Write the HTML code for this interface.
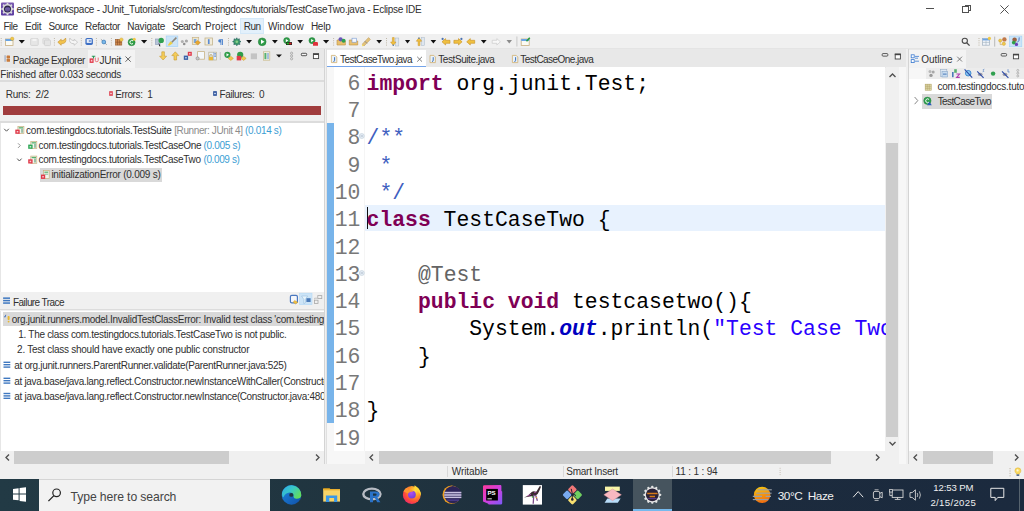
<!DOCTYPE html>
<html><head><meta charset="utf-8">
<style>
*{margin:0;padding:0;box-sizing:border-box}
html,body{width:1024px;height:511px;overflow:hidden;background:#f0f0f0;font-family:'Liberation Sans',sans-serif;font-size:10px;color:#222;position:relative}
.a{position:absolute}
.t{position:absolute;white-space:pre;line-height:1}

.code{font-family:"Liberation Mono",monospace;font-size:21.4px;position:absolute;white-space:pre;line-height:1;transform:scaleY(1.05);transform-origin:0 16.4px;color:#000}
.ln{font-family:"Liberation Mono",monospace;font-size:21.4px;position:absolute;white-space:pre;line-height:1;color:#787878;transform:scaleY(1.05);transform-origin:0 16.4px}
.kw{color:#7f0055;font-weight:bold}
.cm{color:#3f5fbf}
.an{color:#646464}
.st{color:#2a00ff}
.fd{color:#0000c0;font-style:italic;font-weight:bold}
.tri{position:absolute;width:0;height:0;border-left:3.5px solid transparent;border-right:3.5px solid transparent;border-top:4px solid #111}
.sepd{position:absolute;width:1px;height:9px;background:repeating-linear-gradient(#bbb 0 1px,transparent 1px 2px)}

</style></head><body>
<div class="a" style="left:0px;top:0px;width:1024px;height:33.5px;background:#fff;"></div>
<svg class="a" style="left:0;top:0" width="16" height="18" viewBox="0 0 16 18"><defs><linearGradient id="lg1" x1="0" y1="0" x2="0" y2="1"><stop offset="0" stop-color="#7a5ab0"/><stop offset="1" stop-color="#5a3aa0"/></linearGradient></defs><rect x="1" y="2.5" width="13" height="13" rx="1" fill="url(#lg1)"/><g fill="#d8d8dc"><circle cx="7.5" cy="9" r="5"/><rect x="6.6" y="2.8" width="1.8" height="12.4"/><rect x="1.3" y="8.1" width="12.4" height="1.8"/><rect x="6.6" y="2.8" width="1.8" height="12.4" transform="rotate(45 7.5 9)"/><rect x="6.6" y="2.8" width="1.8" height="12.4" transform="rotate(-45 7.5 9)"/></g><circle cx="7.5" cy="9" r="3.5" fill="#2a2640"/><circle cx="7.6" cy="9.3" r="2.5" fill="#5a4a90"/><path d="M5 8.6H10.2M5 9.8H10.2" stroke="#8a7ac0" stroke-width="0.5"/></svg>
<div class="t" id="t0" style="left:16.50px;top:5.04px;font-size:10px;color:#303030;letter-spacing:-0.270px;font-family:'Liberation Sans',sans-serif;">eclipse-workspace - JUnit_Tutorials/src/com/testingdocs/tutorials/TestCaseTwo.java - Eclipse IDE</div>
<div class="a" style="left:925.6px;top:8px;width:8px;height:1px;background:#505050;"></div>
<div class="a" style="left:964.5px;top:4.5px;width:6.5px;height:6.5px;background:#fff;border:1px solid #505050"></div>
<div class="a" style="left:962.3px;top:6.3px;width:6.9px;height:6.5px;background:#fff;border:1px solid #505050"></div>
<svg class="a" style="left:1000px;top:4.5px" width="9" height="9"><path d="M0.4 0.4L8.6 8.6M8.6 0.4L0.4 8.6" stroke="#505050" stroke-width="1"/></svg>
<div class="a" style="left:240.2px;top:18.3px;width:24.2px;height:15.4px;background:#e3f0fb;border:0.6px solid #d4e8f8"></div>
<div class="t" id="t1" style="left:3.40px;top:22.04px;font-size:10px;color:#303030;letter-spacing:-0.456px;font-family:'Liberation Sans',sans-serif;">File</div>
<div class="t" id="t2" style="left:24.90px;top:22.04px;font-size:10px;color:#303030;letter-spacing:-0.184px;font-family:'Liberation Sans',sans-serif;">Edit</div>
<div class="t" id="t3" style="left:48.50px;top:22.04px;font-size:10px;color:#303030;letter-spacing:-0.448px;font-family:'Liberation Sans',sans-serif;">Source</div>
<div class="t" id="t4" style="left:85.10px;top:22.04px;font-size:10px;color:#303030;letter-spacing:-0.350px;font-family:'Liberation Sans',sans-serif;">Refactor</div>
<div class="t" id="t5" style="left:127.20px;top:22.04px;font-size:10px;color:#303030;letter-spacing:-0.184px;font-family:'Liberation Sans',sans-serif;">Navigate</div>
<div class="t" id="t6" style="left:172.20px;top:22.04px;font-size:10px;color:#303030;letter-spacing:-0.565px;font-family:'Liberation Sans',sans-serif;">Search</div>
<div class="t" id="t7" style="left:205.00px;top:22.04px;font-size:10px;color:#303030;letter-spacing:0.054px;font-family:'Liberation Sans',sans-serif;">Project</div>
<div class="t" id="t8" style="left:243.80px;top:22.04px;font-size:10px;color:#303030;letter-spacing:-0.486px;font-family:'Liberation Sans',sans-serif;">Run</div>
<div class="t" id="t9" style="left:267.90px;top:22.04px;font-size:10px;color:#303030;letter-spacing:0.037px;font-family:'Liberation Sans',sans-serif;">Window</div>
<div class="t" id="t10" style="left:310.90px;top:22.04px;font-size:10px;color:#303030;letter-spacing:-0.245px;font-family:'Liberation Sans',sans-serif;">Help</div>
<div class="a" style="left:0px;top:33.5px;width:1024px;height:15.5px;background:#f0f0f0;"></div>
<div class="a" style="left:0px;top:48.2px;width:1024px;height:0.8px;background:#e4e4e4;"></div>
<svg class="a" style="left:0;top:33px" width="1024" height="16" viewBox="0 33 1024 16"><rect x="0.7" y="38.0" width="1" height="1" fill="#c0b8a8"/><rect x="0.7" y="40.2" width="1" height="1" fill="#c0b8a8"/><rect x="0.7" y="42.4" width="1" height="1" fill="#c0b8a8"/><rect x="0.7" y="44.6" width="1" height="1" fill="#c0b8a8"/><rect x="5.4" y="39" width="7.6" height="6.4" fill="#fbfbf4" stroke="#c8b080" stroke-width="0.8"/><rect x="5.4" y="39" width="7.6" height="2" fill="#6aa4e4"/><circle cx="12.2" cy="38.8" r="1.7" fill="#f0c848" stroke="#c89a30" stroke-width="0.4"/><path d="M18.7 40H24.9L21.799999999999997 43.5Z" fill="#111"/><rect x="30.6" y="38.6" width="7.6" height="6.8" rx="0.8" fill="#e6e6e6" stroke="#cfcfcf" stroke-width="0.8"/><rect x="32.4" y="38.8" width="4" height="2.2" fill="#f4f4f4"/><rect x="42.9" y="38.3" width="6" height="5.6" rx="0.8" fill="#e6e6e6" stroke="#d0d0d0" stroke-width="0.7"/><rect x="44.5" y="40" width="6" height="5.6" rx="0.8" fill="#e4e4e4" stroke="#cccccc" stroke-width="0.7"/><rect x="53.9" y="38.0" width="1" height="1" fill="#c0b8a8"/><rect x="53.9" y="40.2" width="1" height="1" fill="#c0b8a8"/><rect x="53.9" y="42.4" width="1" height="1" fill="#c0b8a8"/><rect x="53.9" y="44.6" width="1" height="1" fill="#c0b8a8"/><path d="M57.8 42.2L61.2 39.2V40.8Q64.6 40.6 65.6 38Q67.2 43.6 61.2 43.8V45.3Z" fill="#f2c24c" stroke="#c8922a" stroke-width="0.6"/><path d="M77.6 42.2L74.2 39.2V40.8Q70.8 40.6 69.8 38Q68.2 43.6 74.2 43.8V45.3Z" fill="#f6f6f6" stroke="#bdbdbd" stroke-width="0.7"/><rect x="80.8" y="38.0" width="1" height="1" fill="#c0b8a8"/><rect x="80.8" y="40.2" width="1" height="1" fill="#c0b8a8"/><rect x="80.8" y="42.4" width="1" height="1" fill="#c0b8a8"/><rect x="80.8" y="44.6" width="1" height="1" fill="#c0b8a8"/><rect x="85.4" y="37.9" width="7.5" height="7" rx="1.6" fill="#3d6fc4"/><rect x="86.7" y="39.1" width="4.9" height="3.8" fill="#eaf0fa"/><rect x="88.8" y="40.4" width="2" height="1.2" fill="#3d6fc4"/><rect x="95.9" y="38.0" width="1" height="1" fill="#c0b8a8"/><rect x="95.9" y="40.2" width="1" height="1" fill="#c0b8a8"/><rect x="95.9" y="42.4" width="1" height="1" fill="#c0b8a8"/><rect x="95.9" y="44.6" width="1" height="1" fill="#c0b8a8"/><path d="M100.9 39.3L106.8 44.8" stroke="#9a9a9a" stroke-width="0.9"/><circle cx="103.8" cy="42" r="1.9" fill="#7ab8e8" stroke="#3a78b8" stroke-width="0.7"/><rect x="110.9" y="38.0" width="1" height="1" fill="#c0b8a8"/><rect x="110.9" y="40.2" width="1" height="1" fill="#c0b8a8"/><rect x="110.9" y="42.4" width="1" height="1" fill="#c0b8a8"/><rect x="110.9" y="44.6" width="1" height="1" fill="#c0b8a8"/><rect x="115.4" y="39.3" width="6.4" height="5.8" fill="#d08a50" stroke="#9a6030" stroke-width="0.6"/><path d="M117.5 39.3V45.1M119.7 39.3V45.1M115.4 42.2H121.8" stroke="#8a5028" stroke-width="0.6"/><circle cx="121.4" cy="39.6" r="1.7" fill="#f2cc50" stroke="#c89a30" stroke-width="0.4"/><circle cx="131.6" cy="42.2" r="3.5" fill="#30a048" stroke="#1e7a35" stroke-width="0.5"/><path d="M133 40.9A1.8 1.8 0 1 0 133 43.5" fill="none" stroke="#fff" stroke-width="1"/><circle cx="134.3" cy="39.3" r="1.5" fill="#f0c848"/><path d="M141 40H147.2L144.1 43.5Z" fill="#111"/><rect x="151.3" y="38.0" width="1" height="1" fill="#c0b8a8"/><rect x="151.3" y="40.2" width="1" height="1" fill="#c0b8a8"/><rect x="151.3" y="42.4" width="1" height="1" fill="#c0b8a8"/><rect x="151.3" y="44.6" width="1" height="1" fill="#c0b8a8"/><rect x="155.6" y="39" width="4.5" height="5.5" fill="#b8c4d8" stroke="#8898b8" stroke-width="0.6"/><circle cx="161.2" cy="40.4" r="2.7" fill="#30a050"/><path d="M158.6 42.5L160.6 46.2L159.2 46.2Z" fill="#222"/><rect x="166.2" y="36" width="11.6" height="10.6" fill="#cce4f7" stroke="#a8d4f8" stroke-width="0.7"/><path d="M167.6 45.4L170.4 41.2L172.8 43.2L169.6 45.6Z" fill="#f0d040"/><path d="M171.8 42.2L176.4 37.6" stroke="#8c8478" stroke-width="1.6"/><circle cx="182.3" cy="41.4" r="1.5" fill="#b0b0b0"/><circle cx="186.4" cy="41" r="1.6" fill="#a8a8a8"/><circle cx="184.2" cy="44" r="1.3" fill="#909090"/><rect x="192.3" y="37.4" width="6.4" height="7.2" fill="#eee6cc" stroke="#c8b488" stroke-width="0.7"/><rect x="193.8" y="39" width="2.6" height="4" fill="#7aa6dc"/><path d="M197.5 40.6L200.6 42.6L197.6 44.8L195 42.6Z" fill="#e8a830" stroke="#c08020" stroke-width="0.4"/><rect x="205" y="38" width="7.4" height="7" fill="#f2ecda" stroke="#c4b48c" stroke-width="0.8"/><rect x="207.9" y="39.2" width="1.7" height="4.8" fill="#5a8ad4"/><path d="M221.8 39.2H219.8A1.6 1.6 0 0 0 219.8 42.4H220.5V44.9H221.4V39.9H222.1V44.9H223V39.2Z" fill="#4a80cc"/><rect x="228.0" y="38.0" width="1" height="1" fill="#c0b8a8"/><rect x="228.0" y="40.2" width="1" height="1" fill="#c0b8a8"/><rect x="228.0" y="42.4" width="1" height="1" fill="#c0b8a8"/><rect x="228.0" y="44.6" width="1" height="1" fill="#c0b8a8"/><path d="M236.8 37.8L237.6 39.4L239.4 38.8L239.2 40.6L241 41.6L239.4 42.6L240 44.4L238.2 44.2L236.8 45.7L235.6 44.2L233.8 44.6L234.2 42.6L232.6 41.6L234.2 40.6L234 38.8L235.8 39.4Z" fill="#3c9a6a" stroke="#1e5a5a" stroke-width="0.6"/><circle cx="236.8" cy="41.7" r="1.3" fill="#8ad08a"/><path d="M246.2 40H252L249.1 43.5Z" fill="#111"/><circle cx="262.2" cy="41.8" r="3.9" fill="#2f9c48" stroke="#1c7a34" stroke-width="0.5"/><path d="M261 39.6V44L264.5 41.8Z" fill="#fff"/><path d="M272 40H277.8L274.9 43.5Z" fill="#111"/><circle cx="286.7" cy="40.6" r="3.1" fill="#2f9c48" stroke="#1c7a34" stroke-width="0.4"/><path d="M285.8 39V42.2L288.4 40.6Z" fill="#fff"/><rect x="286" y="42.1" width="6" height="2.9" fill="#222"/><rect x="286.7" y="42.8" width="2.2" height="1.5" fill="#20c020"/><rect x="289.2" y="42.8" width="2.2" height="1.5" fill="#e02020"/><path d="M297.3 40H303L300.15 43.5Z" fill="#111"/><circle cx="312" cy="40.6" r="3.1" fill="#2f9c48" stroke="#1c7a34" stroke-width="0.4"/><path d="M311.1 39V42.2L313.7 40.6Z" fill="#fff"/><path d="M313 43.2Q313 42 314.2 42H316.8Q318 42 318 43.2V45.7H313Z" fill="#e0303c"/><path d="M323 40H329.2L326.1 43.5Z" fill="#111"/><rect x="333.1" y="38.0" width="1" height="1" fill="#c0b8a8"/><rect x="333.1" y="40.2" width="1" height="1" fill="#c0b8a8"/><rect x="333.1" y="42.4" width="1" height="1" fill="#c0b8a8"/><rect x="333.1" y="44.6" width="1" height="1" fill="#c0b8a8"/><path d="M337 40H340L341 41H345.4V45H337Z" fill="#e8c070" stroke="#c09040" stroke-width="0.6"/><circle cx="340.6" cy="39.3" r="2.1" fill="#6a58b8"/><circle cx="343.6" cy="40.8" r="2" fill="#30a050"/><path d="M349.3 40H352.3L353.3 41H357.7V45H349.3Z" fill="#e8c070" stroke="#c09040" stroke-width="0.6"/><rect x="352" y="38.2" width="4.6" height="4" fill="#f4f8ff" stroke="#7a9ad0" stroke-width="0.6"/><path d="M362.2 44.2L368.6 37.6L370.4 39.4L364 46Z" fill="#e2c27a" stroke="#b89050" stroke-width="0.5"/><path d="M362.2 44.2L364 46L362 46.2Z" fill="#f4e060"/><path d="M364.8 41.2L367 43.4" stroke="#8a8a8a" stroke-width="1"/><path d="M376.3 40H382L379.15 43.5Z" fill="#111"/><rect x="386.0" y="38.0" width="1" height="1" fill="#c0b8a8"/><rect x="386.0" y="40.2" width="1" height="1" fill="#c0b8a8"/><rect x="386.0" y="42.4" width="1" height="1" fill="#c0b8a8"/><rect x="386.0" y="44.6" width="1" height="1" fill="#c0b8a8"/><rect x="395.6" y="38" width="3.2" height="8" fill="#dfe6ee" stroke="#a8b8c8" stroke-width="0.5"/><path d="M392.4 37.6H394.2V42H396L393.3 45.6L390.6 42H392.4Z" fill="#f0c040" stroke="#c89020" stroke-width="0.5"/><rect x="392.6" y="44.6" width="1.4" height="1.2" fill="#4a78c0"/><path d="M405 40H410.1L407.55 43.5Z" fill="#111"/><rect x="421.2" y="37.6" width="3.2" height="8" fill="#dfe6ee" stroke="#a8b8c8" stroke-width="0.5"/><path d="M418.1 45.6H419.9V41.2H421.7L419 37.6L416.3 41.2H418.1Z" fill="#f0c040" stroke="#c89020" stroke-width="0.5"/><rect x="418.2" y="37.6" width="1.4" height="1.2" fill="#4a78c0"/><path d="M430.6 40H436.2L433.4 43.5Z" fill="#111"/><path d="M442 41.8L445.6 38.6V40.3H450 V43.3H445.6V45Z" fill="#f0c040" stroke="#c89020" stroke-width="0.6"/><circle cx="442.6" cy="38.9" r="1.1" fill="#4a70b0"/><path d="M462.09999999999997 41.8L458.5 38.6V40.3H453.9 V43.3H458.5V45Z" fill="#f0c040" stroke="#c89020" stroke-width="0.6"/><circle cx="461.4" cy="38.9" r="1.1" fill="#4a70b0"/><path d="M466.7 41.8L470.3 38.6V40.3H474.7 V43.3H470.3V45Z" fill="#f0c040" stroke="#c89020" stroke-width="0.6"/><path d="M480.9 40H486.6L483.75 43.5Z" fill="#111"/><path d="M500.4 41.8L496.8 38.6V40.3H492.2 V43.3H496.8V45Z" fill="#f8f8f8" stroke="#c4c4c4" stroke-width="0.6"/><path d="M506.5 40H512L509.25 43.5Z" fill="#8a8a8a"/><rect x="516.4" y="36.5" width="1" height="10" fill="#c8c8c8"/><rect x="521.2" y="39" width="8" height="6.4" fill="#fbfbf4" stroke="#c8b080" stroke-width="0.8"/><rect x="521.2" y="39" width="8" height="2" fill="#6aa4e4"/><path d="M526.5 41.2L529.8 37.8" stroke="#2a9a40" stroke-width="1.6"/><circle cx="964.8" cy="40.8" r="2.6" fill="none" stroke="#4a4a4a" stroke-width="1.1"/><path d="M966.7 42.7L969.6 45.6" stroke="#4a4a4a" stroke-width="1.3"/><rect x="978.5" y="38.0" width="1" height="1" fill="#c0b8a8"/><rect x="978.5" y="40.2" width="1" height="1" fill="#c0b8a8"/><rect x="978.5" y="42.4" width="1" height="1" fill="#c0b8a8"/><rect x="978.5" y="44.6" width="1" height="1" fill="#c0b8a8"/><rect x="982.6" y="38.6" width="7" height="6.6" fill="#f0f4f8" stroke="#a0b0c0" stroke-width="0.7"/><rect x="982.6" y="38.6" width="7" height="1.8" fill="#6aa4e4"/><path d="M982.6 42.4H989.6M986 40.4V45.2" stroke="#a0b0c0" stroke-width="0.6"/><circle cx="989.4" cy="38.4" r="1.6" fill="#f0c848"/><rect x="994.2" y="36.6" width="1" height="10" fill="#b8b8b8"/><circle cx="1000.2" cy="40.6" r="1.6" fill="#f0c848" stroke="#c89a30" stroke-width="0.4"/><circle cx="1004.4" cy="39.4" r="2.2" fill="#c07848"/><circle cx="1003.8" cy="43.8" r="1.7" fill="#f0c848" stroke="#c89a30" stroke-width="0.4"/><path d="M1000.2 42.2V44.6H1002" stroke="#c8a050" stroke-width="0.6" fill="none"/><rect x="1009.6" y="36.1" width="12.2" height="10.6" fill="#cce4f7" stroke="#a8d4f8" stroke-width="0.7"/><circle cx="1014.6" cy="39.8" r="2.3" fill="#9a6040"/><circle cx="1013.8" cy="42.6" r="1.9" fill="#30a048"/><circle cx="1016.4" cy="44.4" r="1.7" fill="#6a40b8"/><path d="M1019.2 37.4Q1019.6 41 1017.4 42.4" stroke="#3a6ac0" stroke-width="0.9" fill="none"/></svg>
<div class="a" style="left:0px;top:49px;width:325px;height:19px;background:#e8e8e8;"></div>
<div class="a" style="left:87.5px;top:49.5px;width:47px;height:18px;background:#f3f3f3;"></div>
<div class="t" id="t11" style="left:12.80px;top:55.53px;font-size:10px;color:#303030;letter-spacing:-0.421px;font-family:'Liberation Sans',sans-serif;">Package Explorer</div>
<div class="t" id="t12" style="left:99.50px;top:55.53px;font-size:10px;color:#303030;letter-spacing:-0.259px;font-family:'Liberation Sans',sans-serif;">JUnit</div>
<svg class="a" style="left:0px;top:49px" width="325" height="18" viewBox="0 49 325 18"><rect x="4.4" y="55.2" width="1.4" height="6.6" fill="#a8b4c8"/><rect x="6.6" y="55.4" width="3.4" height="3" rx="0.6" fill="#c87a3a"/><rect x="6.6" y="58.8" width="3.4" height="3" rx="0.6" fill="#c87a3a"/><rect x="89.6" y="58.4" width="4" height="4.5" fill="#e03a4a"/><rect x="90.8" y="59.8" width="1.6" height="1.8" fill="#f8c8d0"/><path d="M91.8 56.3H95.3M93.5 56.3V58.4" stroke="#2a9a5a" stroke-width="1.1"/><path d="M95.3 57.6V60.6Q95.3 61.7 96.7 61.7Q98.2 61.7 98.2 60.6V57.6" fill="none" stroke="#e8606a" stroke-width="0.9"/><path d="M125.5 56.5L130.7 61.7M130.7 56.5L125.5 61.7" stroke="#555" stroke-width="0.9"/><path d="M161.8 51.8H164.4V56.2H166.6L163.1 60L159.6 56.2H161.8Z" fill="#f4cc58" stroke="#c89a30" stroke-width="0.6"/><path d="M174 60H176.6V55.6H178.8L175.3 51.8L171.8 55.6H174Z" fill="#f4cc58" stroke="#c89a30" stroke-width="0.6"/><rect x="183.8" y="55.6" width="4.3" height="4.3" fill="#3a62a8"/><rect x="185.2" y="57" width="1.5" height="1.5" fill="#c8d4ec"/><rect x="187.8" y="51.8" width="4" height="4" fill="#e03a4a"/><rect x="189.1" y="53.1" width="1.4" height="1.4" fill="#f8c8d0"/><rect x="197.6" y="51.6" width="6.8" height="7.6" fill="#f4f8fc" stroke="#c8b488" stroke-width="0.8"/><circle cx="197.6" cy="58.4" r="1.6" fill="#c8c8c8" stroke="#8a8a8a" stroke-width="0.6"/><rect x="208.8" y="52.2" width="7.8" height="7.8" fill="#e8f0f8" stroke="#b8b090" stroke-width="0.7"/><path d="M213.6 52.2V60" stroke="#8aa0c8" stroke-width="0.6"/><rect x="214.2" y="53.4" width="1.8" height="1" fill="#4a78c0"/><rect x="214.2" y="55.6" width="1.8" height="1" fill="#4a78c0"/><rect x="209" y="56.8" width="4" height="3.4" fill="#e8b838"/><path d="M209.8 56.8V55.8A1.2 1.2 0 0 1 212.2 55.8V56.8" fill="none" stroke="#a88020" stroke-width="0.6"/><rect x="219.8" y="52" width="0.9" height="8" fill="#c4c4c4"/><circle cx="227.4" cy="54.8" r="3.1" fill="#2f9c48"/><path d="M226.5 53.2V56.4L229 54.8Z" fill="#fff"/><path d="M230.8 56.3L233.4 58.4L230.8 60.4L228.2 58.4Z" fill="#f0c850" stroke="#c89a30" stroke-width="0.5"/><circle cx="240.2" cy="54.8" r="3.1" fill="#2f9c48"/><rect x="236.7" y="55.9" width="4.5" height="4.5" fill="#e03a4a"/><path d="M243.6 56.3L246.2 58.4L243.6 60.4L241 58.4Z" fill="#f0c850" stroke="#c89a30" stroke-width="0.5"/><rect x="250.8" y="53.4" width="6.2" height="5.8" fill="#c4c4c4"/><rect x="263.4" y="51.8" width="6.4" height="8.4" fill="#f4f4ec" stroke="#c8b888" stroke-width="0.7"/><rect x="264.4" y="53" width="2" height="6.2" fill="#58b070"/><rect x="267" y="53" width="2" height="6.2" fill="#a8c0e0"/><path d="M276.1 54.6H281.9L279 57.6Z" fill="#111"/><circle cx="291.6" cy="53.2" r="1.1" fill="none" stroke="#999" stroke-width="0.7"/><circle cx="291.6" cy="56" r="1.1" fill="none" stroke="#999" stroke-width="0.7"/><circle cx="291.6" cy="58.8" r="1.1" fill="none" stroke="#999" stroke-width="0.7"/><rect x="301.3" y="53.3" width="5.4" height="2.4" rx="0.8" fill="#f4f4f4" stroke="#444" stroke-width="0.9"/><rect x="313.4" y="53.8" width="5.2" height="4.8" fill="#fff" stroke="#444" stroke-width="0.9"/><rect x="313" y="53.4" width="6" height="1.6" fill="#444"/></svg>
<div class="t" id="t13" style="left:0.30px;top:70.03px;font-size:10px;color:#303030;letter-spacing:-0.276px;font-family:'Liberation Sans',sans-serif;">Finished after 0.033 seconds</div>
<div class="a" style="left:0px;top:80px;width:325px;height:1.6px;background:#dcdcdc;"></div>
<div class="t" id="t14" style="left:5.80px;top:89.83px;font-size:10px;color:#303030;letter-spacing:-0.269px;font-family:'Liberation Sans',sans-serif;">Runs:  2/2</div>
<div class="a" style="left:108.9px;top:90.9px;width:4.2px;height:5.1px;background:#e2606c;border-radius:0.8px"></div>
<div class="a" style="left:110.3px;top:92.6px;width:1.4px;height:1.6px;background:#f4b8c0;"></div>
<div class="t" id="t15" style="left:115.30px;top:89.83px;font-size:10px;color:#303030;letter-spacing:-0.392px;font-family:'Liberation Sans',sans-serif;">Errors:  1</div>
<div class="a" style="left:213px;top:90.9px;width:4.3px;height:5.1px;background:#4a6aa8;border-radius:0.8px"></div>
<div class="a" style="left:214.4px;top:92.6px;width:1.5px;height:1.6px;background:#b8c8e8;"></div>
<div class="t" id="t16" style="left:219.50px;top:89.83px;font-size:10px;color:#303030;letter-spacing:-0.389px;font-family:'Liberation Sans',sans-serif;">Failures:  0</div>
<div class="a" style="left:3.4px;top:106px;width:317.6px;height:9px;background:#a03c3d;"></div>
<div class="a" style="left:0px;top:121px;width:325px;height:1.5px;background:#dcdcdc;"></div>
<div class="a" style="left:0px;top:122.5px;width:324px;height:169.5px;background:#fff;"></div>
<div class="a" style="left:0px;top:122.5px;width:1px;height:169.5px;background:#e6e6e6;"></div>
<div class="t" id="t17" style="left:26.10px;top:126.03px;font-size:10px;color:#303030;letter-spacing:-0.245px;font-family:'Liberation Sans',sans-serif;">com.testingdocs.tutorials.TestSuite</div>
<div class="t" id="t18" style="left:174.20px;top:126.03px;font-size:10px;color:#8c8c8c;letter-spacing:-0.385px;font-family:'Liberation Sans',sans-serif;">[Runner: JUnit 4]</div>
<div class="t" id="t19" style="left:245.10px;top:126.03px;font-size:10px;color:#3b9ed4;letter-spacing:-0.341px;font-family:'Liberation Sans',sans-serif;">(0.014 s)</div>
<div class="t" id="t20" style="left:38.50px;top:140.53px;font-size:10px;color:#303030;letter-spacing:-0.287px;font-family:'Liberation Sans',sans-serif;">com.testingdocs.tutorials.TestCaseOne</div>
<div class="t" id="t21" style="left:203.50px;top:140.53px;font-size:10px;color:#3b9ed4;letter-spacing:-0.297px;font-family:'Liberation Sans',sans-serif;">(0.005 s)</div>
<div class="t" id="t22" style="left:38.50px;top:155.34px;font-size:10px;color:#303030;letter-spacing:-0.285px;font-family:'Liberation Sans',sans-serif;">com.testingdocs.tutorials.TestCaseTwo</div>
<div class="t" id="t23" style="left:203.50px;top:155.34px;font-size:10px;color:#3b9ed4;letter-spacing:-0.385px;font-family:'Liberation Sans',sans-serif;">(0.009 s)</div>
<div class="a" style="left:39.8px;top:167.7px;width:122px;height:14.3px;background:#d9d9d9;"></div>
<svg class="a" style="left:0px;top:122px" width="325" height="62" viewBox="0 122 325 62"><path d="M4.2 128.8L6.5 131.2L8.8 128.8" fill="none" stroke="#555" stroke-width="1"/><rect x="17.900000000000002" y="126.4" width="6" height="7.2" fill="#f2f6ec" stroke="#c8b080" stroke-width="0.7"/><rect x="18.7" y="127.2" width="4.4" height="1.3" fill="#58b070"/><rect x="21.1" y="128.8" width="2" height="4" fill="#9ac0a8"/><rect x="15.3" y="129.6" width="4.4" height="4.2" fill="#e03a4a"/><rect x="16.7" y="131" width="1.6" height="1.5" fill="#fff" opacity="0.75"/><path d="M18 143.3L20.3 145.6L18 147.9" fill="none" stroke="#888" stroke-width="0.9"/><rect x="30.8" y="141.4" width="6" height="7.2" fill="#f2f6ec" stroke="#c8b080" stroke-width="0.7"/><rect x="31.599999999999998" y="142.2" width="4.4" height="1.3" fill="#58b070"/><rect x="34.0" y="143.8" width="2" height="4" fill="#9ac0a8"/><rect x="28.2" y="144.6" width="4.4" height="4.2" fill="#30a858"/><rect x="29.599999999999998" y="146" width="1.6" height="1.5" fill="#fff" opacity="0.75"/><path d="M17.2 158.6L19.4 161L21.6 158.6" fill="none" stroke="#555" stroke-width="1"/><rect x="30.8" y="156.1" width="6" height="7.2" fill="#f2f6ec" stroke="#c8b080" stroke-width="0.7"/><rect x="31.599999999999998" y="156.89999999999998" width="4.4" height="1.3" fill="#58b070"/><rect x="34.0" y="158.5" width="2" height="4" fill="#9ac0a8"/><rect x="28.2" y="159.29999999999998" width="4.4" height="4.2" fill="#e03a4a"/><rect x="29.599999999999998" y="160.7" width="1.6" height="1.5" fill="#fff" opacity="0.75"/><rect x="43.4" y="170.4" width="5.8" height="8.2" fill="#f2f6ec" stroke="#c8b080" stroke-width="0.7"/><rect x="44.4" y="171.6" width="3.8" height="1.2" fill="#58b070"/><rect x="44.4" y="173.6" width="3.8" height="1.2" fill="#9ac0a8"/><rect x="41" y="174.6" width="4.2" height="4.3" fill="#e03a4a"/><rect x="42.3" y="176" width="1.5" height="1.5" fill="#fff" opacity="0.75"/></svg>
<div class="t" id="t24" style="left:51.40px;top:170.03px;font-size:10px;color:#303030;letter-spacing:-0.244px;font-family:'Liberation Sans',sans-serif;">initializationError (0.009 s)</div>
<div class="a" style="left:0px;top:291.6px;width:324px;height:18.4px;background:#f0f0f0;"></div>
<div class="t" id="t25" style="left:13.10px;top:297.74px;font-size:10px;color:#303030;letter-spacing:-0.581px;font-family:'Liberation Sans',sans-serif;">Failure Trace</div>
<div class="a" style="left:0px;top:309.4px;width:324px;height:1.1px;background:#dcdcdc;"></div>
<div class="a" style="left:0px;top:310.5px;width:324px;height:140px;background:#fff;"></div>
<div class="a" style="left:0px;top:310.5px;width:1px;height:140px;background:#e6e6e6;"></div>
<div class="a" style="left:2.8px;top:311.5px;width:321.5px;height:14.5px;background:#d9d9d9;"></div>
<div class="t" id="t26" style="left:11.70px;top:314.64px;font-size:10px;color:#303030;letter-spacing:-0.281px;font-family:'Liberation Sans',sans-serif;">org.junit.runners.model.InvalidTestClassError: Invalid test class '</div>
<div class="t" id="t27" style="left:276.00px;top:314.64px;font-size:10px;color:#303030;letter-spacing:-0.281px;font-family:'Liberation Sans',sans-serif;">com.testingdocs.tutorials.TestCaseTwo'</div>
<div class="t" id="t28" style="left:18.30px;top:329.84px;font-size:10px;color:#303030;letter-spacing:-0.302px;font-family:'Liberation Sans',sans-serif;">1. The class com.testingdocs.tutorials.TestCaseTwo is not public.</div>
<div class="t" id="t29" style="left:17.10px;top:345.04px;font-size:10px;color:#303030;letter-spacing:-0.248px;font-family:'Liberation Sans',sans-serif;">2. Test class should have exactly one public constructor</div>
<div class="t" id="t30" style="left:14.30px;top:360.84px;font-size:10px;color:#303030;letter-spacing:-0.338px;font-family:'Liberation Sans',sans-serif;">at org.junit.runners.ParentRunner.validate(ParentRunner.java:525)</div>
<div class="t" id="t31" style="left:14.30px;top:376.84px;font-size:10px;color:#303030;letter-spacing:-0.316px;font-family:'Liberation Sans',sans-serif;">at java.base/java.lang.reflect.Constructor.newInstanceWithCaller(</div>
<div class="t" id="t32" style="left:283.40px;top:376.84px;font-size:10px;color:#303030;letter-spacing:-0.316px;font-family:'Liberation Sans',sans-serif;">Constructor.java:500)</div>
<div class="t" id="t33" style="left:14.30px;top:392.04px;font-size:10px;color:#303030;letter-spacing:-0.313px;font-family:'Liberation Sans',sans-serif;">at java.base/java.lang.reflect.Constructor.newInstance(</div>
<div class="t" id="t34" style="left:239.70px;top:392.04px;font-size:10px;color:#303030;letter-spacing:-0.313px;font-family:'Liberation Sans',sans-serif;">Constructor.java:480)</div>
<svg class="a" style="left:0px;top:292px" width="325" height="110" viewBox="0 292 325 110"><rect x="3.1" y="297.40" width="6.9" height="1.5" fill="#3f78c0"/><rect x="3.1" y="299.85" width="6.9" height="1.5" fill="#3f78c0"/><rect x="3.1" y="302.30" width="6.9" height="1.5" fill="#3f78c0"/><rect x="290.4" y="295.4" width="7" height="7.4" rx="1.4" fill="#f4f6fa" stroke="#4a78c0" stroke-width="1.2"/><path d="M294.6 300.4L297.7 302.3L295.6 304L293.2 302.2Z" fill="#f0c040" stroke="#c89020" stroke-width="0.4"/><rect x="299.6" y="293.2" width="12.4" height="11.4" fill="#cce4f7" stroke="#b4daf8" stroke-width="0.6"/><path d="M301.6 296H307.6L305.4 299.4V302.8L303.8 303.6V299.4Z" fill="#e8f4fc" stroke="#8ab4d8" stroke-width="0.5"/><rect x="306.4" y="298.2" width="4.2" height="3.8" fill="#4a7ab8"/><rect x="317.8" y="295.6" width="4" height="3" fill="none" stroke="#a8a8a8" stroke-width="0.8"/><rect x="314.4" y="300.2" width="3.6" height="3.2" fill="none" stroke="#a8a8a8" stroke-width="0.8"/><path d="M314.6 299.4V298.2H317" fill="none" stroke="#a8a8a8" stroke-width="0.6"/><path d="M4.2 316.6Q5.2 318.6 5.8 314.8" fill="none" stroke="#3a6ab8" stroke-width="0.9"/><rect x="7.6" y="315.9" width="2" height="4.2" rx="0.8" fill="#e8b830"/><rect x="7.7" y="320.8" width="1.8" height="1.7" rx="0.8" fill="#e8b830"/><rect x="3.5" y="361.60" width="6.8" height="1.4" fill="#3f78c0"/><rect x="3.5" y="364.00" width="6.8" height="1.4" fill="#3f78c0"/><rect x="3.5" y="366.40" width="6.8" height="1.4" fill="#3f78c0"/><rect x="3.5" y="377.60" width="6.8" height="1.4" fill="#3f78c0"/><rect x="3.5" y="380.00" width="6.8" height="1.4" fill="#3f78c0"/><rect x="3.5" y="382.40" width="6.8" height="1.4" fill="#3f78c0"/><rect x="3.5" y="392.80" width="6.8" height="1.4" fill="#3f78c0"/><rect x="3.5" y="395.20" width="6.8" height="1.4" fill="#3f78c0"/><rect x="3.5" y="397.60" width="6.8" height="1.4" fill="#3f78c0"/></svg>
<div class="a" style="left:0px;top:450.5px;width:324px;height:13.5px;background:#f0f0f0;"></div>
<div class="a" style="left:14px;top:451.2px;width:215.2px;height:12.5px;background:#cdcdcd;"></div>
<svg class="a" style="left:5px;top:454.3px" width="5" height="7"><path d="M4 0.5L1 3.5L4 6.5" fill="none" stroke="#505050" stroke-width="1.35"/></svg>
<svg class="a" style="left:315px;top:454.3px" width="5" height="7"><path d="M1 0.5L4 3.5L1 6.5" fill="none" stroke="#505050" stroke-width="1.35"/></svg>
<div class="a" style="left:324px;top:49px;width:1.2px;height:415px;background:#d4d4d4;"></div>
<div class="a" style="left:327px;top:49px;width:579px;height:18.5px;background:#e8e8e8;"></div>
<div class="a" style="left:327px;top:49.7px;width:99px;height:17.6px;background:#fff;"></div>
<div class="a" style="left:327px;top:65.6px;width:99px;height:2px;background:#74a4ea;"></div>
<div class="t" id="t35" style="left:340.10px;top:55.03px;font-size:10px;color:#303030;letter-spacing:-0.585px;font-family:'Liberation Sans',sans-serif;">TestCaseTwo.java</div>
<div class="t" id="t36" style="left:438.30px;top:55.03px;font-size:10px;color:#303030;letter-spacing:-0.433px;font-family:'Liberation Sans',sans-serif;">TestSuite.java</div>
<div class="t" id="t37" style="left:520.30px;top:55.03px;font-size:10px;color:#303030;letter-spacing:-0.551px;font-family:'Liberation Sans',sans-serif;">TestCaseOne.java</div>
<svg class="a" style="left:327px;top:49px" width="579" height="18" viewBox="327 49 579 18"><path d="M331.4 55.4H335.2L336.8 57V62.6H331.4Z" fill="#eaf2fb" stroke="#d0b070" stroke-width="0.8"/><path d="M334.6 57.2V60.4Q334.6 61.6 333.4 61.4" fill="none" stroke="#3a70b8" stroke-width="1"/><path d="M430.0 55.4H433.8L435.40000000000003 57V62.6H430.0Z" fill="#eaf2fb" stroke="#d0b070" stroke-width="0.8"/><path d="M433.20000000000005 57.2V60.4Q433.20000000000005 61.6 432.0 61.4" fill="none" stroke="#3a70b8" stroke-width="1"/><path d="M512.4 55.4H516.2L517.8 57V62.6H512.4Z" fill="#eaf2fb" stroke="#d0b070" stroke-width="0.8"/><path d="M515.6 57.2V60.4Q515.6 61.6 514.4 61.4" fill="none" stroke="#3a70b8" stroke-width="1"/><path d="M417.2 56.8L422 61.6M422 56.8L417.2 61.6" stroke="#666" stroke-width="0.85"/><rect x="882.2" y="53.6" width="5.6" height="2.5" rx="0.8" fill="#f4f4f4" stroke="#444" stroke-width="0.9"/><rect x="895.2" y="54.2" width="5.2" height="4.8" fill="#fff" stroke="#444" stroke-width="0.9"/><rect x="894.8" y="53.6" width="6" height="1.6" fill="#444"/></svg>
<div class="a" style="left:327px;top:67.4px;width:558px;height:383.6px;background:#fff;"></div>
<div class="a" style="left:327px;top:67.4px;width:6.7px;height:396.6px;background:#f7f7f7;"></div>
<div class="a" style="left:364.3px;top:67.4px;width:0.8px;height:383.6px;background:#f5f5f5;"></div>
<div class="a" style="left:327.3px;top:122.9px;width:6.5px;height:299.7px;background:#78b4ea;"></div>
<div class="a" style="left:365px;top:205.2px;width:520px;height:25.8px;background:#e8f2fe;"></div>
<div class="a" style="left:366.5px;top:207px;width:1.2px;height:22px;background:#111;"></div>
<div class="a" style="left:0;top:67.4px;width:885.5px;height:383.6px;overflow:hidden"><div class="a" style="left:0;top:-67.4px;width:1024px;height:511px"><div class="ln" style="left:347.56px;top:73.90px;letter-spacing:0">6</div>
<div class="code" style="left:366.6px;top:73.90px"><span class="kw">import</span> org.junit.Test;</div>
<div class="ln" style="left:347.56px;top:101.18px;letter-spacing:0">7</div>
<div class="ln" style="left:347.56px;top:128.46px;letter-spacing:0">8</div>
<div class="code" style="left:366.6px;top:128.46px"><span class="cm">/**</span></div>
<div class="ln" style="left:347.56px;top:155.74px;letter-spacing:0">9</div>
<div class="code" style="left:366.6px;top:155.74px"><span class="cm"> *</span></div>
<div class="ln" style="left:334.72px;top:183.02px;letter-spacing:0">10</div>
<div class="code" style="left:366.6px;top:183.02px"><span class="cm"> */</span></div>
<div class="ln" style="left:334.72px;top:210.30px;letter-spacing:0">11</div>
<div class="code" style="left:366.6px;top:210.30px"><span class="kw">class</span> TestCaseTwo {</div>
<div class="ln" style="left:334.72px;top:237.58px;letter-spacing:0">12</div>
<div class="ln" style="left:334.72px;top:264.86px;letter-spacing:0">13</div>
<div class="code" style="left:366.6px;top:264.86px">    <span class="an">@Test</span></div>
<div class="ln" style="left:334.72px;top:292.14px;letter-spacing:0">14</div>
<div class="code" style="left:366.6px;top:292.14px">    <span class="kw">public</span> <span class="kw">void</span> testcasetwo(){</div>
<div class="ln" style="left:334.72px;top:319.42px;letter-spacing:0">15</div>
<div class="code" style="left:366.6px;top:319.42px">        System.<span class="fd">out</span>.println(<span class="st">"Test Case Two"</span>);</div>
<div class="ln" style="left:334.72px;top:346.70px;letter-spacing:0">16</div>
<div class="code" style="left:366.6px;top:346.70px">    }</div>
<div class="ln" style="left:334.72px;top:373.98px;letter-spacing:0">17</div>
<div class="ln" style="left:334.72px;top:401.26px;letter-spacing:0">18</div>
<div class="code" style="left:366.6px;top:401.26px">}</div>
<div class="ln" style="left:334.72px;top:428.54px;letter-spacing:0">19</div></div></div>
<svg class="a" style="left:358px;top:132.3px" width="8" height="8" viewBox="358 132.3 8 8"><circle cx="361.8" cy="136.3" r="2.5" fill="#e4ecf4" stroke="#c0ccd8" stroke-width="0.6"/><path d="M360.6 136.3H363" stroke="#8a9ab0" stroke-width="0.6"/></svg>
<svg class="a" style="left:358px;top:269.1px" width="8" height="8" viewBox="358 269.1 8 8"><circle cx="361.8" cy="273.1" r="2.5" fill="#e4ecf4" stroke="#c0ccd8" stroke-width="0.6"/><path d="M360.6 273.1H363" stroke="#8a9ab0" stroke-width="0.6"/></svg>
<div class="a" style="left:885.7px;top:67.4px;width:13.3px;height:383.6px;background:#f0f0f0;"></div>
<div class="a" style="left:886.3px;top:142.7px;width:12px;height:294px;background:#cdcdcd;"></div>
<svg class="a" style="left:888.5px;top:73px" width="7" height="5"><path d="M0.5 4L3.5 1L6.5 4" fill="none" stroke="#505050" stroke-width="1.35"/></svg>
<svg class="a" style="left:888.5px;top:441px" width="7" height="5"><path d="M0.5 1L3.5 4L6.5 1" fill="none" stroke="#505050" stroke-width="1.35"/></svg>
<div class="a" style="left:899px;top:67.4px;width:7px;height:396.6px;background:#f7f7f7;"></div>
<div class="a" style="left:333.7px;top:451px;width:31.3px;height:13px;background:#f7f7f7;"></div>
<div class="a" style="left:365px;top:451px;width:520.7px;height:13px;background:#f0f0f0;"></div>
<div class="a" style="left:379px;top:451.2px;width:452px;height:12.5px;background:#cdcdcd;"></div>
<svg class="a" style="left:369px;top:454.3px" width="5" height="7"><path d="M4 0.5L1 3.5L4 6.5" fill="none" stroke="#505050" stroke-width="1.35"/></svg>
<svg class="a" style="left:875px;top:454.3px" width="5" height="7"><path d="M1 0.5L4 3.5L1 6.5" fill="none" stroke="#505050" stroke-width="1.35"/></svg>
<div class="a" style="left:325.2px;top:49px;width:1.1px;height:415px;background:#f0f0f0;"></div>
<div class="a" style="left:326.3px;top:49px;width:0.8px;height:415px;background:#e0e0e0;"></div>
<div class="a" style="left:906px;top:49px;width:2.5px;height:415px;background:#f0f0f0;"></div>
<div class="a" style="left:908.5px;top:49px;width:115.5px;height:415px;background:#fff;"></div>
<div class="a" style="left:908.5px;top:49px;width:115.5px;height:18.6px;background:#e8e8e8;"></div>
<div class="a" style="left:909px;top:49.8px;width:57px;height:17.8px;background:#f3f3f3;"></div>
<div class="a" style="left:908.5px;top:67.6px;width:115.5px;height:11px;background:#f7f7f7;"></div>
<div class="a" style="left:925.6px;top:67.6px;width:98.4px;height:11.1px;background:#ececec;"></div>
<div class="a" style="left:908px;top:49px;width:1px;height:415px;background:#d4d4d4;"></div>
<div class="t" id="t38" style="left:921.30px;top:54.83px;font-size:10px;color:#303030;letter-spacing:-0.070px;font-family:'Liberation Sans',sans-serif;">Outline</div>
<div class="a" style="left:922.2px;top:94.3px;width:69.5px;height:14.4px;background:#d9d9d9;"></div>
<svg class="a" style="left:908px;top:49px" width="116" height="60" viewBox="908 49 116 60"><rect x="911.2" y="54.8" width="3" height="3" fill="#fff" stroke="#3a7ad0" stroke-width="0.8"/><rect x="911.2" y="59.6" width="3" height="3" fill="#fff" stroke="#3a7ad0" stroke-width="0.8"/><path d="M915 56.4H919M915 58.2H918M915 61.2H919" stroke="#3a7ad0" stroke-width="0.8"/><path d="M957.2 56.7L962 61.5M962 56.7L957.2 61.5" stroke="#666" stroke-width="0.85"/><rect x="1001.2" y="53.6" width="5.4" height="2.4" rx="0.8" fill="#f4f4f4" stroke="#444" stroke-width="0.9"/><rect x="1013.4" y="54.4" width="5.2" height="4.4" fill="#fff" stroke="#444" stroke-width="0.9"/><rect x="1013" y="53.8" width="6" height="1.6" fill="#444"/><circle cx="930" cy="71.4" r="1.5" fill="#b8b8b8"/><circle cx="933.2" cy="72" r="1.5" fill="#a8a8a8"/><circle cx="931" cy="75.4" r="1.7" fill="#9a9a9a"/><rect x="940.4" y="69.6" width="6.4" height="6.8" fill="#dde8f4" stroke="#9ab0c8" stroke-width="0.6"/><rect x="942" y="71.4" width="5.6" height="5.6" fill="#c8dcf0" stroke="#8aa8c8" stroke-width="0.6"/><rect x="943" y="73.6" width="3.6" height="1" fill="#4a7ab8"/><rect x="952" y="72" width="1.6" height="5.2" fill="#4a7ab8"/><rect x="954.2" y="69.2" width="2.6" height="3.6" fill="#58b070"/><path d="M956.4 74H959.6L956.6 77.4H959.8" fill="none" stroke="#b040b0" stroke-width="1.1"/><circle cx="968.2" cy="73.2" r="2.8" fill="#8ac8f0" stroke="#2a78c8" stroke-width="0.8"/><path d="M964.6 69.4L972.2 77.6" stroke="#2a4aa8" stroke-width="1.1"/><ellipse cx="980.2" cy="74.4" rx="2.4" ry="1.6" fill="#9a9aa8"/><path d="M977.2 71.4L983.6 77.8" stroke="#2a4aa8" stroke-width="1.1"/><path d="M984.4 69.2Q982.4 69.4 983.4 70.6Q984.6 71.6 982.6 71.8" fill="none" stroke="#4a7ac0" stroke-width="0.6"/><circle cx="993.1" cy="73.6" r="2.2" fill="#30a050"/><ellipse cx="1005" cy="74.4" rx="2.4" ry="1.6" fill="#9a9aa8"/><path d="M1002 71.4L1008.4 77.8" stroke="#2a4aa8" stroke-width="1.1"/><path d="M1008 69.2V72H1009.6" fill="none" stroke="#4a7ac0" stroke-width="0.7"/><circle cx="1017.8" cy="70.4" r="1" fill="none" stroke="#999" stroke-width="0.6"/><circle cx="1017.8" cy="73.2" r="1" fill="none" stroke="#999" stroke-width="0.6"/><circle cx="1017.8" cy="76" r="1" fill="none" stroke="#999" stroke-width="0.6"/><rect x="925.2" y="84.2" width="6" height="6" fill="#e8e4b8" stroke="#b0a060" stroke-width="0.6"/><path d="M927.2 84.2V90.2M929.2 84.2V90.2M925.2 86.2H931.2M925.2 88.2H931.2" stroke="#a09050" stroke-width="0.5"/><path d="M914.6 97L917.8 100.6L914.6 104.2" fill="none" stroke="#888" stroke-width="1"/><circle cx="927.4" cy="100.8" r="3.7" fill="#30a050" stroke="#1e7a35" stroke-width="0.4"/><path d="M928.9 99.4A1.9 1.9 0 1 0 928.9 102.2" fill="none" stroke="#fff" stroke-width="1"/><path d="M929.4 101.8L931.8 105.2H927Z" fill="#2a5ab8"/></svg>
<div class="t" id="t39" style="left:937.50px;top:82.23px;font-size:10px;color:#303030;letter-spacing:-0.245px;font-family:'Liberation Sans',sans-serif;">com.testingdocs.tutorials</div>
<div class="t" id="t40" style="left:937.70px;top:97.33px;font-size:10px;color:#303030;letter-spacing:-0.603px;font-family:'Liberation Sans',sans-serif;">TestCaseTwo</div>
<div class="a" style="left:908.5px;top:450.5px;width:115.5px;height:13.5px;background:#f0f0f0;"></div>
<div class="a" style="left:923px;top:451.3px;width:70.2px;height:12.3px;background:#cdcdcd;"></div>
<svg class="a" style="left:912.5px;top:454.3px" width="5" height="7"><path d="M4 0.5L1 3.5L4 6.5" fill="none" stroke="#505050" stroke-width="1.35"/></svg>
<svg class="a" style="left:1014px;top:454.3px" width="5" height="7"><path d="M1 0.5L4 3.5L1 6.5" fill="none" stroke="#505050" stroke-width="1.35"/></svg>
<div class="a" style="left:0px;top:464px;width:1024px;height:14.7px;background:#f0f0f0;"></div>
<div class="a" style="left:447px;top:465.5px;width:1px;height:11px;background:#d8d8d8;"></div>
<div class="t" id="t41" style="left:451.80px;top:467.04px;font-size:10px;color:#303030;letter-spacing:-0.100px;font-family:'Liberation Sans',sans-serif;">Writable</div>
<div class="a" style="left:562.6px;top:465.5px;width:1px;height:11px;background:#d8d8d8;"></div>
<div class="t" id="t42" style="left:566.20px;top:467.04px;font-size:10px;color:#303030;letter-spacing:-0.231px;font-family:'Liberation Sans',sans-serif;">Smart Insert</div>
<div class="a" style="left:671.7px;top:465.5px;width:1px;height:11px;background:#d8d8d8;"></div>
<div class="t" id="t43" style="left:675.50px;top:467.04px;font-size:10px;color:#303030;letter-spacing:-0.159px;font-family:'Liberation Sans',sans-serif;">11 : 1 : 94</div>
<svg class="a" style="left:778px;top:466px" width="4" height="11" viewBox="778 466 4 11"><g fill="#c8c0b8"><rect x="779.6" y="467.8" width="1" height="1"/><rect x="779.6" y="469.9" width="1" height="1"/><rect x="779.6" y="472" width="1" height="1"/><rect x="779.6" y="474.1" width="1" height="1"/></g></svg>
<svg class="a" style="left:1005px;top:465px" width="19" height="13" viewBox="1005 465 19 13"><g fill="#b8b0a0"><rect x="1009.6" y="468" width="0.9" height="1.2"/><rect x="1009.6" y="470.4" width="0.9" height="1.2"/><rect x="1009.6" y="472.8" width="0.9" height="1.2"/><rect x="1009.6" y="475.2" width="0.9" height="1.2"/></g><path d="M1017.9 467.8A3 3 0 0 1 1020.9 470.8Q1020.9 472.4 1019.4 473.6V474.2H1016.4V473.6Q1014.9 472.4 1014.9 470.8A3 3 0 0 1 1017.9 467.8Z" fill="#f8d860" stroke="#e0b030" stroke-width="0.5"/><circle cx="1017.6" cy="470.4" r="1.1" fill="#fff8d0"/><rect x="1016.5" y="474.2" width="2.8" height="1.9" rx="0.6" fill="#5a7090"/></svg>
<div class="a" style="left:0;top:478.7px;width:1024px;height:32.3px;background:linear-gradient(90deg,#223a45 0%,#20343f 35%,#1c2b3d 70%,#1b2a3e 100%)"></div>
<div class="a" style="left:38.7px;top:478.7px;width:231px;height:32.3px;background:#f2f2f2;border-top:1px solid #d4d4d4"></div>
<div class="t" id="t44" style="left:70.60px;top:490.77px;font-size:12.2px;color:#444;letter-spacing:-0.106px;font-family:'Liberation Sans',sans-serif;">Type here to search</div>
<div class="a" style="left:633.1px;top:478.7px;width:39.1px;height:32.3px;background:#46545e;"></div>
<div class="a" style="left:633.1px;top:509.2px;width:39.1px;height:1.8px;background:#76b9ed;"></div>
<svg class="a" style="left:0px;top:479px" width="1024" height="32" viewBox="0 479 1024 32"><defs><linearGradient id="edg" x1="0.2" y1="0" x2="0.8" y2="1"><stop offset="0" stop-color="#3ab4e8"/><stop offset="0.45" stop-color="#44c8b0"/><stop offset="0.7" stop-color="#5ad870"/><stop offset="1" stop-color="#2a90d8"/></linearGradient><linearGradient id="edb" x1="0" y1="0" x2="1" y2="1"><stop offset="0" stop-color="#1e88e0"/><stop offset="1" stop-color="#1050a8"/></linearGradient><radialGradient id="ffg" cx="0.7" cy="0.25" r="0.9"><stop offset="0" stop-color="#ffe040"/><stop offset="0.35" stop-color="#ff9a28"/><stop offset="0.7" stop-color="#ff4a3a"/><stop offset="1" stop-color="#e8207a"/></radialGradient><radialGradient id="ffp" cx="0.4" cy="0.3" r="0.8"><stop offset="0" stop-color="#b050f0"/><stop offset="1" stop-color="#6a3ad8"/></radialGradient><linearGradient id="psg" x1="0" y1="0" x2="1" y2="1"><stop offset="0" stop-color="#ff3a9a"/><stop offset="0.5" stop-color="#d040e0"/><stop offset="1" stop-color="#7a5af8"/></linearGradient><linearGradient id="sun" x1="0" y1="0" x2="0.3" y2="1"><stop offset="0" stop-color="#f8cc10"/><stop offset="1" stop-color="#f07010"/></linearGradient></defs><path d="M13 489L18.6 488.3V493.6H13ZM19.6 488.1L26 487.3V493.6H19.6ZM13 494.6H18.6V500.3L13 499.7ZM19.6 494.6H26V501.8L19.6 501Z" fill="#fff"/><circle cx="56.6" cy="492.8" r="3.8" fill="none" stroke="#222" stroke-width="1.2"/><path d="M53.9 495.6L48.4 501.1" stroke="#222" stroke-width="1.3"/><linearGradient id="edt" x1="0" y1="0" x2="1" y2="0.6"><stop offset="0" stop-color="#30a8e8"/><stop offset="0.5" stop-color="#38c8c8"/><stop offset="1" stop-color="#60dc60"/></linearGradient><circle cx="291.5" cy="494.9" r="9.8" fill="url(#edb)"/><path d="M281.9 493.2A9.8 9.8 0 0 1 301.3 495.6Q300.8 498.8 296.6 498.8Q293.2 498.6 293.6 495.4Q293.2 492.2 289.6 492.4Q285.2 492.8 283.8 496.6Q282.6 498.6 281.9 493.2Z" fill="url(#edt)"/><ellipse cx="291.3" cy="494.9" rx="2.1" ry="1.9" fill="#213640"/><path d="M323.2 488.2H329.6L330.8 489.4H323.2Z" fill="#e8a818"/><rect x="323.2" y="489" width="16.8" height="12.6" fill="#f8d468"/><rect x="323.2" y="489" width="16.8" height="1.4" fill="#eab030"/><path d="M325.9 501.9V495.4H337.2V501.9H334.1V498.1H329.3V501.9Z" fill="#3a98e8"/><ellipse cx="371.9" cy="494" rx="8.6" ry="5.4" fill="none" stroke="#b8bcc4" stroke-width="2.4"/><path d="M370 502.2V491.6H375.6Q379.6 491.6 379.6 494.6Q379.6 496.8 377.4 497.4L380.4 502.2H377.2L374.8 497.8H373V502.2ZM373 495.8H375.2Q376.6 495.8 376.6 494.6Q376.6 493.6 375.2 493.6H373Z" fill="#2a72c8" fill-rule="evenodd"/><circle cx="411.8" cy="495" r="8.9" fill="url(#ffg)"/><path d="M414.6 485.2Q421.8 489.6 420.8 496Q419 490 414.2 489.4Z" fill="#ffd838"/><circle cx="411.9" cy="494.6" r="3.9" fill="url(#ffp)"/><path d="M403.4 491.6Q405.2 487.6 407.6 487.8L408.6 490.2Q411.8 489.4 413.4 491.8Q409.6 491.2 408 493.4Z" fill="#ff9830" opacity="0.9"/><circle cx="451.6" cy="494.7" r="9.1" fill="#f0a020"/><circle cx="452.8" cy="494.7" r="8.6" fill="#2c2458"/><rect x="444.4" y="491.8" width="17" height="1.6" fill="#c8c0e0"/><rect x="444.2" y="494.2" width="17.2" height="1.6" fill="#c8c0e0"/><rect x="444.4" y="496.6" width="17" height="1.5" fill="#c8c0e0"/><rect x="446.6" y="499.6" width="12.4" height="1" fill="#5a48a0"/><path d="M483 486.6Q482.8 485.4 484 485.3L500.6 485.1Q501.6 485.2 501.4 486.6V491L502.2 491.6V503.2Q502.2 504.6 500.6 504.6H490Q488.6 504.6 487.8 503.4L483 501.6Z" fill="url(#psg)"/><rect x="486.2" y="488.9" width="11.7" height="11.6" fill="#000"/><text x="487.4" y="495.4" font-family="Liberation Sans" font-size="6.2" font-weight="bold" fill="#fff">PS</text><rect x="487.4" y="498.4" width="4.4" height="0.9" fill="#fff"/><rect x="522.8" y="485.1" width="19.2" height="19.5" fill="#fff"/><path d="M524 497.6Q527.6 496.4 530.4 493.2Q532.6 490.4 535 491.4Q536.6 492.4 537.4 490L539.6 486.2Q540.8 485.8 540.8 487.2L539 491.6Q538 494.6 535.6 495.6Z" fill="#3a2a30"/><path d="M533.8 494.8L533.2 503.8M535.6 495L537.4 500.8" fill="none" stroke="#7a4a8a" stroke-width="1.3"/><path d="M527.4 496.2L531 494.2M534.2 492.6L536.4 492" stroke="#b050b0" stroke-width="0.9"/><circle cx="532.6" cy="496.8" r="0.9" fill="#40a040"/><circle cx="536.4" cy="497.6" r="0.8" fill="#e0a040"/><g transform="rotate(45 572.4 494.85)"><rect x="565.3" y="487.75" width="6.7" height="6.7" rx="1.3" fill="#f07878"/><rect x="572.8" y="487.75" width="6.7" height="6.7" rx="1.3" fill="#70d060"/><rect x="572.8" y="495.25" width="6.7" height="6.7" rx="1.3" fill="#f8e070"/><rect x="565.3" y="495.25" width="6.7" height="6.7" rx="1.3" fill="#78aaf0"/></g><path d="M571.2 488.8Q572.6 492 572.3 498.6M572.6 494.2Q575.6 493.6 575.6 496.2" fill="none" stroke="#223" stroke-width="1"/><circle cx="572.3" cy="499.4" r="1.3" fill="#223"/><rect x="605" y="486.6" width="14.8" height="4.3" fill="#f8f4a8"/><path d="M604.6 502.8L607.4 498.6H620.6L617.8 502.8Z" fill="#b8dcf8"/><path d="M603.8 494.8L612.6 488.9L621.4 494.8L612.6 500.7Z" fill="#f8b8c0" stroke="#c88890" stroke-width="0.4"/><g fill="#e4e4e4"><rect x="651.2" y="485.8" width="2.2" height="18" rx="0.8" transform="rotate(0 652.3 494.8)"/><rect x="651.2" y="485.8" width="2.2" height="18" rx="0.8" transform="rotate(30 652.3 494.8)"/><rect x="651.2" y="485.8" width="2.2" height="18" rx="0.8" transform="rotate(60 652.3 494.8)"/><rect x="651.2" y="485.8" width="2.2" height="18" rx="0.8" transform="rotate(90 652.3 494.8)"/><rect x="651.2" y="485.8" width="2.2" height="18" rx="0.8" transform="rotate(120 652.3 494.8)"/><rect x="651.2" y="485.8" width="2.2" height="18" rx="0.8" transform="rotate(150 652.3 494.8)"/></g><circle cx="652.3" cy="494.8" r="7.6" fill="#e4e4e4"/><circle cx="652.3" cy="494.8" r="6.4" fill="#2a2238"/><path d="M647.2 493.6H657.6M649.6 496.6H655" stroke="#d87a18" stroke-width="1.5"/><path d="M648 498.6H656.6" stroke="#5a3a90" stroke-width="1"/><circle cx="762.1" cy="494.9" r="8.2" fill="url(#sun)"/><g stroke="#9aa0a8" stroke-width="1.1"><path d="M757.6 489.8H771.8"/><path d="M756.2 493.2H771.6"/><path d="M752.8 496.4H762M765.6 496.4H771"/><path d="M752.8 499.6H768.4"/></g><path d="M853.2 497.2L858.2 491.6L863.2 497.2" fill="none" stroke="#e8e8e8" stroke-width="1"/><rect x="873.4" y="491.4" width="6.4" height="7.2" rx="1.6" fill="none" stroke="#d8d8d8" stroke-width="0.9"/><path d="M879.8 493.4L882.2 492.2V497.8L879.8 496.6" fill="none" stroke="#d8d8d8" stroke-width="0.9"/><path d="M874.6 489.8H878.6M874.6 500.4H878.6" stroke="#d8d8d8" stroke-width="0.8"/><rect x="892.2" y="490" width="10.8" height="7.4" fill="none" stroke="#d8d8d8" stroke-width="0.9"/><path d="M889.8 491.6V495.6H892.2M897.6 497.4V499.2M894.8 499.4H900.6" fill="none" stroke="#d8d8d8" stroke-width="0.9"/><rect x="889.6" y="489.6" width="3" height="2.4" fill="#1c2b3e" stroke="#d8d8d8" stroke-width="0.8"/><path d="M910 492.6H912.2L915.4 489.8V500.2L912.2 497.4H910Z" fill="none" stroke="#d8d8d8" stroke-width="0.9"/><path d="M917.2 493Q918.4 495 917.2 497M919.4 491.4Q921.4 495 919.4 498.6" fill="none" stroke="#d8d8d8" stroke-width="0.8"/><path d="M990.8 488.3H1003.8V497.4H997.8L995.2 500.6V497.4H990.8Z" fill="none" stroke="#e8e8e8" stroke-width="1"/></svg>
<div class="t" id="t45" style="left:777.80px;top:490.91px;font-size:11.8px;color:#f0f0f0;letter-spacing:-0.487px;font-family:'Liberation Sans',sans-serif;">30°C  Haze</div>
<div class="t" id="t46" style="left:933.30px;top:483.37px;font-size:9.6px;color:#f0f0f0;letter-spacing:-0.110px;font-family:'Liberation Sans',sans-serif;">12:53 PM</div>
<div class="t" id="t47" style="left:930.40px;top:498.37px;font-size:9.6px;color:#f0f0f0;letter-spacing:0.335px;font-family:'Liberation Sans',sans-serif;">2/15/2025</div>
<div class="a" style="left:1019.4px;top:478.7px;width:1px;height:32.3px;background:#56636e;"></div>
</body></html>
